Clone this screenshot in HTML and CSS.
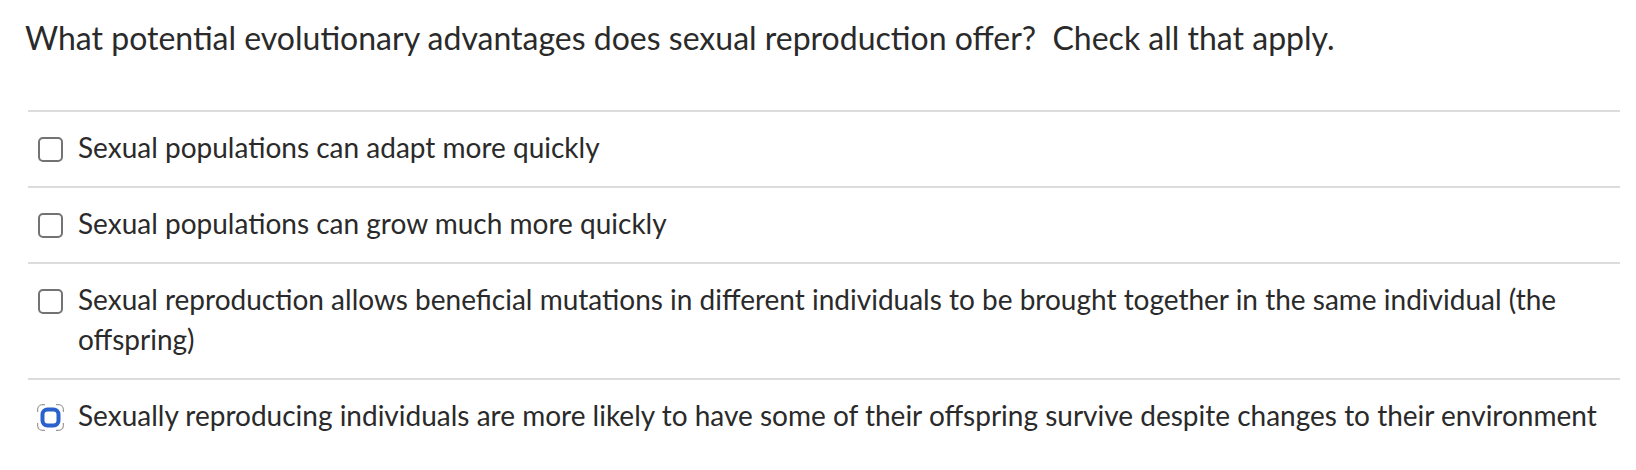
FILE: index.html
```html
<!DOCTYPE html>
<html lang="en">
<head>
    <meta charset="UTF-8">
    <title>Quiz question</title>
    <link rel="stylesheet" href="styles.css">
</head>
<body>
    <div class="question">
        <div class="question-text">What potential evolutionary advantages does sexual reproduction offer?&nbsp; Check all that apply.</div>

        <div class="answers">
            <label class="answer">
                <span class="box"></span>
                <span class="answer-text">Sexual populations can adapt more quickly</span>
            </label>
            <label class="answer">
                <span class="box"></span>
                <span class="answer-text">Sexual populations can grow much more quickly</span>
            </label>
            <label class="answer">
                <span class="box"></span>
                <span class="answer-text">Sexual reproduction allows beneficial mutations in different individuals to be brought together in the same individual (the offspring)</span>
            </label>
            <label class="answer">
                <!-- focused box -->
                <svg class="box-focus" width="27" height="27" viewBox="0 0 27 27">
                    <g fill="none" stroke="#9a9a9a" stroke-width="1.2">
                        <path d="M0.6 8 V5.5 A5 5 0 0 1 5.5 0.6 H8"/>
                        <path d="M19 0.6 H21.5 A5 5 0 0 1 26.4 5.5 V8"/>
                        <path d="M26.4 19 V21.5 A5 5 0 0 1 21.5 26.4 H19"/>
                        <path d="M8 26.4 H5.5 A5 5 0 0 1 0.6 21.5 V19"/>
                    </g>
                    <rect x="5.5" y="5.5" width="16" height="16" rx="5" fill="#fff" stroke="#2a61cc" stroke-width="4"/>
                </svg>
                <span class="answer-text">Sexually reproducing individuals are more likely to have some of their offspring survive despite changes to their environment</span>
            </label>
        </div>
    </div>
</body>
</html>
```

FILE: styles.css
```css
/* page */
body {
    margin: 0;
    background-color: #fff;
    color: #2a2a2a;
    font-family: Lato, "Open Sans", "Liberation Sans", sans-serif;
}

.question {
    padding: 0 16px 0 28px;
}

/* question heading */
.question-text {
    font-size: 32px;
    line-height: 40px;
    padding-top: 18px;
    margin-left: -3px;
    margin-bottom: 52px;
}

/* answer rows */
.answer {
    display: flex;
    align-items: flex-start;
    gap: 15px;
    padding: 15px 0 19px 10px;
    border-top: 2px solid #dcdcdc;
    font-size: 28px;
    line-height: 40px;
}

.box {
    flex: none;
    width: 25px;
    height: 25px;
    margin-top: 10px;
    box-sizing: border-box;
    border: 2px solid #737373;
    border-radius: 5px;
    background-color: #fff;
}

.box-focus {
    flex: none;
    margin: 9px -1px 0 -1px;
}

.answer-text {
    flex: 1;
}
```
